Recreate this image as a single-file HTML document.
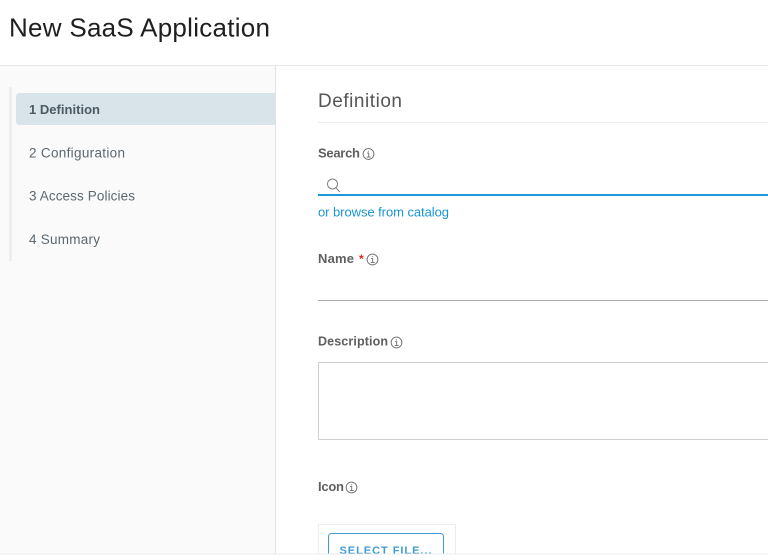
<!DOCTYPE html>
<html>
<head>
<meta charset="utf-8">
<style>
html,body{margin:0;padding:0;width:768px;height:560px;overflow:hidden;background:#fff}
svg{display:block;font-family:"Liberation Sans",sans-serif;filter:blur(0.35px)}
</style>
</head>
<body>
<svg width="768" height="560" viewBox="0 0 768 560" xmlns="http://www.w3.org/2000/svg">
<defs>
<g id="info" fill="none" stroke="#6a6a6a" stroke-width="0.9">
<circle cx="0" cy="0" r="5.400"/>
<path d="M-1.4 -0.9H0.2V2.9M-1.8 3.1H2.1M-0.2 -3.200V-2.200"/>
</g>
</defs>
<rect width="768" height="560" fill="#fff"/>
<text x="9" y="36.500" font-size="26" fill="#1f1f1f" textLength="261" lengthAdjust="spacing">New SaaS Application</text>
<rect x="0" y="65" width="768" height="1" fill="#e8e8e8"/>

<rect x="0" y="66" width="275" height="488" fill="#fafafa"/>
<rect x="275" y="66" width="1" height="488" fill="#e2e2e2"/>
<rect x="9" y="87" width="3" height="174" fill="#eeeeee"/>
<path d="M275 93H19a3 3 0 0 0-3 3V122a3 3 0 0 0 3 3H275Z" fill="#d8e3ea"/>
<text x="29" y="114" font-size="13" font-weight="700" fill="#4c5a63" textLength="71" lengthAdjust="spacing">1 Definition</text>
<text x="29" y="157.500" font-size="13.500" fill="#5b6870" textLength="96" lengthAdjust="spacing">2 Configuration</text>
<text x="29" y="200.500" font-size="13.500" fill="#5b6870" textLength="106" lengthAdjust="spacing">3 Access Policies</text>
<text x="29" y="244" font-size="13.500" fill="#5b6870" textLength="71" lengthAdjust="spacing">4 Summary</text>

<text x="318" y="107" font-size="19" fill="#565656" textLength="84" lengthAdjust="spacing">Definition</text>
<rect x="318" y="122" width="450" height="1" fill="#eeeeee"/>

<text x="318" y="157.500" font-size="13" font-weight="700" fill="#5f5f5f" textLength="42" lengthAdjust="spacing">Search</text>
<use href="#info" x="368.500" y="154"/>
<g fill="none" stroke="#808080" stroke-width="1">
<circle cx="332.500" cy="184" r="5"/>
<path d="M336 188L340 192"/>
</g>
<rect x="318" y="194" width="450" height="2" fill="#1a9ad6"/>
<text x="318" y="216.500" font-size="13" fill="#1a95d0" textLength="131" lengthAdjust="spacing">or browse from catalog</text>

<text x="318" y="263" font-size="13" font-weight="700" fill="#5f5f5f" textLength="36" lengthAdjust="spacing">Name</text>
<text x="359" y="263" font-size="12" font-weight="700" fill="#e02020">*</text>
<use href="#info" x="372.500" y="259.500"/>
<rect x="318" y="300" width="450" height="1" fill="#a8a8a8"/>

<text x="318" y="345.500" font-size="12.500" font-weight="700" fill="#5f5f5f" textLength="70" lengthAdjust="spacing">Description</text>
<use href="#info" x="396.500" y="342.500"/>
<rect x="318.500" y="362.500" width="460" height="77" fill="#fff" stroke="#d0d0d0"/>

<text x="318" y="491" font-size="13" font-weight="700" fill="#5f5f5f" textLength="26" lengthAdjust="spacing">Icon</text>
<use href="#info" x="351.500" y="487.500"/>

<rect x="318.500" y="524.500" width="137" height="40" fill="#fff" stroke="#eeeeee"/>
<rect x="328.500" y="533.500" width="115" height="36" rx="3" fill="#fff" stroke="#3f9bd3" stroke-width="1"/>
<text x="339.500" y="554" font-size="11" font-weight="700" fill="#3f9bd3" textLength="92" lengthAdjust="spacing">SELECT FILE...</text>

<rect x="0" y="554" width="768" height="6" fill="#ffffff"/>
<rect x="0" y="553.500" width="768" height="1" fill="#eeeeee"/>
</svg>
</body>
</html>
